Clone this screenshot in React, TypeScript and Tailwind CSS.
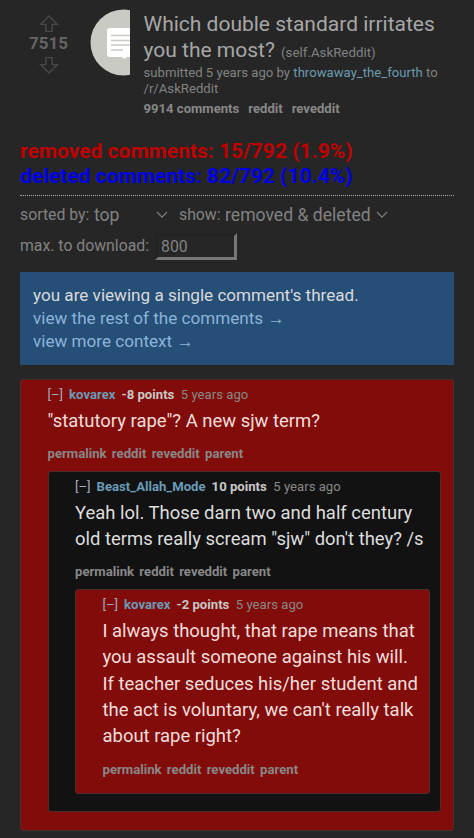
import type { ReactNode } from "react";

interface CommentProps {
  author: string;
  points: string;
  className: string;
  bodyClass: string;
  lines: string[];
  children?: ReactNode;
}

function VoteArrow({ down = false }: { down?: boolean }) {
  return (
    <svg
      width="20"
      height="19"
      viewBox="0 0 20 19"
      fill="none"
      stroke="#484848"
      strokeWidth="1.4"
      className={down ? "rotate-180" : ""}
    >
      <path d="M10 2 L18.4 10.4 H13.2 V17.4 H6.8 V10.4 H1.6 Z" />
    </svg>
  );
}

function Chevron() {
  return (
    <svg width="12" height="8" viewBox="0 0 12 8" fill="none" stroke="#828282" strokeWidth="1.1">
      <path d="M1 1 L6 6.2 L11 1" />
    </svg>
  );
}

// Self-post thumbnail, cut off on its right side
function Thumbnail() {
  return (
    <svg width="40" height="67" viewBox="0 0 40 67" className="shrink-0">
      <circle cx="33.5" cy="33.5" r="33" fill="#c9cac3" />
      <path d="M20 19 H40 V48 H37 L34.5 50 L32 48 H20 Q17 48 17 45 V22 Q17 19 20 19 Z" fill="#fff" />
      <path d="M21 26.5 H40 M21 31.5 H40 M21 36 H40 M21 41 H33" stroke="#c9cac3" strokeWidth="1.5" />
    </svg>
  );
}

function Comment({ author, points, className, bodyClass, lines, children }: CommentProps) {
  return (
    <div className={`rounded-[3px] border border-[#4a302d] pl-[26.5px] ${className}`}>
      <div className="flex h-[17px] items-center gap-[6px] text-[13.15px] leading-[17px] whitespace-nowrap">
        <span className="text-[#a5a9bd]">[–]</span>
        <span className="font-bold text-[#6a9bb8]">{author}</span>
        <span className="font-bold text-[#c8c8c8]">{points}</span>
        <span className="ml-[0.5px] text-[#888]">5 years ago</span>
      </div>
      <div className={`mt-[5px] text-[18.45px] leading-[26.4px] whitespace-nowrap ${bodyClass}`}>
        {lines.map((line) => (
          <div key={line}>{line}</div>
        ))}
      </div>
      <div className="mt-[11px] flex h-[17px] gap-[5.3px] text-[13.15px] leading-[17px] font-bold text-[#888]">
        <span>permalink</span>
        <span>reddit</span>
        <span>reveddit</span>
        <span>parent</span>
      </div>
      {children}
    </div>
  );
}

export default function App() {
  return (
    <div className="h-[838px] w-[474px] overflow-hidden bg-[#262626] pl-5 font-['Roboto',sans-serif] text-[#828282]">
      <header className="flex h-[139px] pt-[9px]">
        <div className="flex w-[57px] flex-col items-center pt-[5px]">
          <VoteArrow />
          <div className="h-[23px] text-[17px] leading-[21px] font-bold text-[#646464]">7515</div>
          <VoteArrow down />
        </div>
        <div className="ml-[13px]">
          <Thumbnail />
        </div>
        <div className="ml-[13.5px] whitespace-nowrap">
          <div className="pt-[3px] text-[21px] leading-[25.6px] text-[#a6a6a6]">
            <div>Which double standard irritates</div>
            <div>
              you the most? <span className="ml-px text-[13.3px] text-[#828282]">(self.AskReddit)</span>
            </div>
          </div>
          <div className="text-[13.15px] leading-[15.5px]">
            submitted 5 years ago by <span className="text-[#6a9bb0]">throwaway_the_fourth</span> to
            <br />
            /r/AskReddit
          </div>
          <div className="mt-[3.5px] flex gap-[9px] text-[13.1px] leading-[18px] font-bold text-[#888]">
            <span>9914 comments</span>
            <span>reddit</span>
            <span>reveddit</span>
          </div>
        </div>
      </header>

      <div className="mr-5 h-[57px] border-b border-dotted border-[#aaa] text-[21px] leading-[25px] font-bold whitespace-nowrap">
        <div className="text-[#c00000]">removed comments: 15/792 (1.9%)</div>
        <div className="text-[#0000e6]">deleted comments: 82/792 (10.4%)</div>
      </div>

      <div className="mt-[8px] flex h-[22px] items-center text-[15.8px] leading-[22px] whitespace-nowrap">
        <div className="w-[74px]">sorted by:</div>
        <div className="w-[62px] text-[17.6px]">top</div>
        <Chevron />
        <div className="ml-[11px] w-[46px]">show:</div>
        <div className="w-[151px] text-[17.6px]">removed &amp; deleted</div>
        <Chevron />
      </div>
      <div className="mt-[7px] flex h-[26px] items-center text-[15.8px] whitespace-nowrap">
        <div className="w-[135px]">max. to download:</div>
        <div className="h-[27px] w-[82px] border-[3px] border-t-[#222] border-r-[#777] border-b-[#777] border-l-[#222] pl-[3px] leading-[21px]">
          800
        </div>
      </div>

      <div className="mt-[13px] mr-5 h-[93px] bg-[#264f78] pt-[12px] pl-[13px] text-[17.1px] leading-[23px] whitespace-nowrap text-[#dadada]">
        <div>you are viewing a single comment's thread.</div>
        <div className="text-[#8cb3d9]">view the rest of the comments →</div>
        <div className="text-[#8cb3d9]">view more context →</div>
      </div>

      <Comment
        author="kovarex"
        points="-8 points"
        className="mt-[14px] mr-5 h-[452px] bg-[#820c09] pt-[5.5px]"
        bodyClass="text-[#f2dedc]"
        lines={['"statutory rape"? A new sjw term?']}
      >
        <Comment
          author="Beast_Allah_Mode"
          points="10 points"
          className="mt-[9.1px] mr-[12px] h-[341px] bg-[#121212] pt-[5.5px]"
          bodyClass="text-[#dedede]"
          lines={["Yeah lol. Those darn two and half century", 'old terms really scream "sjw" don\'t they? /s']}
        >
          <Comment
            author="kovarex"
            points="-2 points"
            className="mt-[8.5px] mr-[10px] h-[205px] bg-[#820c09] pt-[6px]"
            bodyClass="text-[#f2dedc]"
            lines={[
              "I always thought, that rape means that",
              "you assault someone against his will.",
              "If teacher seduces his/her student and",
              "the act is voluntary, we can't really talk",
              "about rape right?",
            ]}
          />
        </Comment>
      </Comment>
    </div>
  );
}
